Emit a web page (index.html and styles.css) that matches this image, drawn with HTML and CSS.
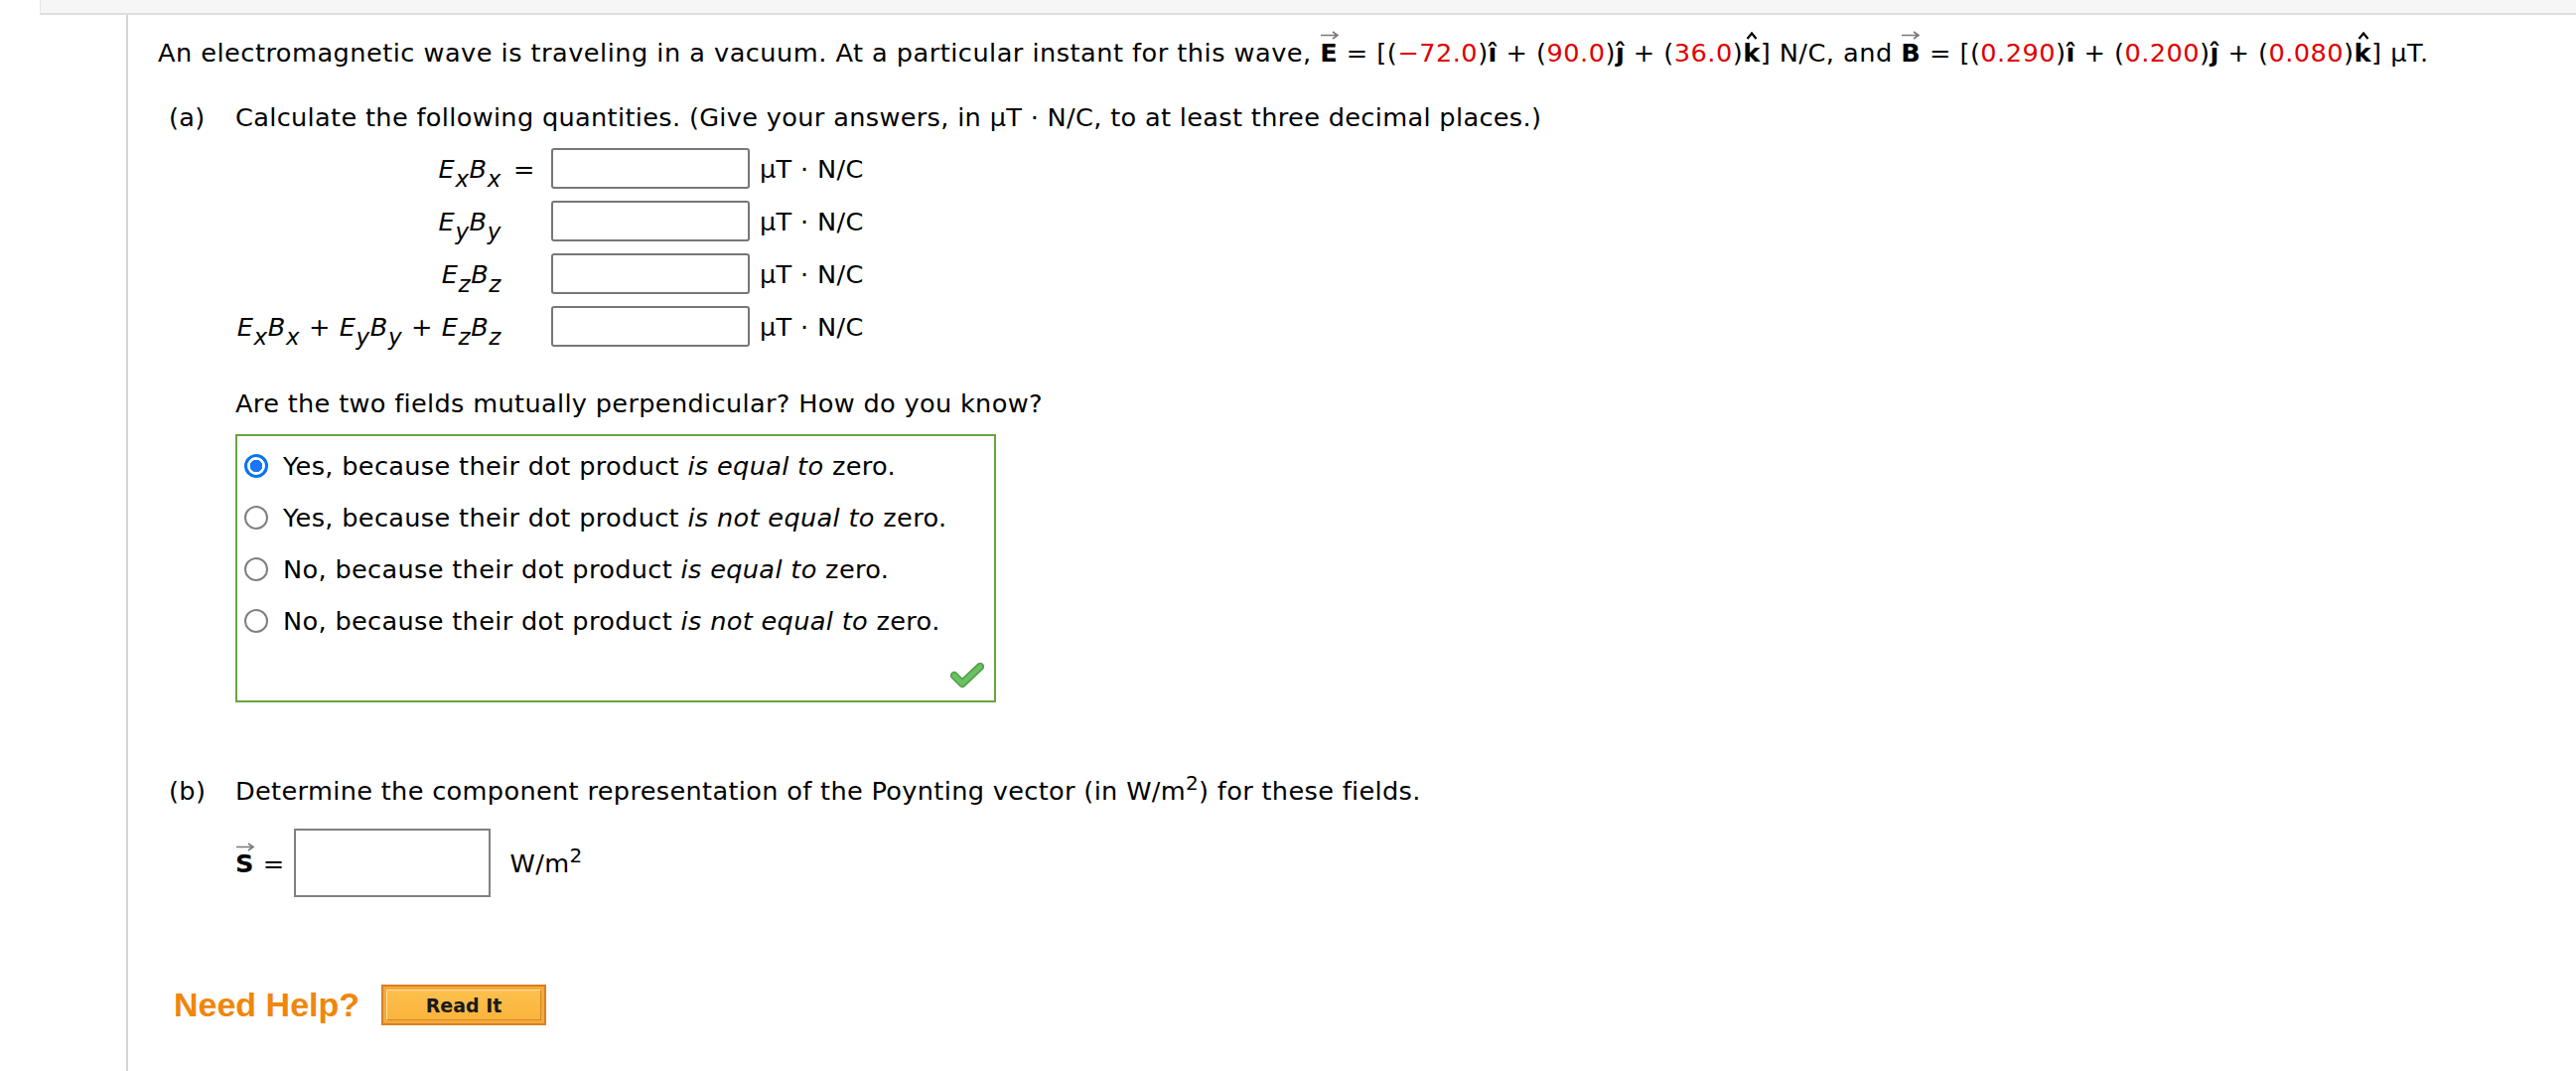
FILE: index.html
```html
<!DOCTYPE html>
<html lang="en">
<head>
<meta charset="utf-8">
<title>Electromagnetic wave</title>
<link rel="stylesheet" href="styles.css">
</head>
<body>
<div class="topbar"></div>
<div class="page">
  <div class="question">
    <p class="intro">An electromagnetic wave is traveling in a vacuum. At a particular instant for this wave, <span class="vec">E<svg class="arr" width="20" height="9" viewBox="0 0 20 9"><path d="M1 4.5 H17 M13 1 L18 4.5 L13 8" fill="none" stroke="#7a7a7a" stroke-width="1.6"/></svg></span> = [(<span class="red">&minus;72.0</span>)<b>&icirc;</b> + (<span class="red">90.0</span>)<b>&jcirc;</b> + (<span class="red">36.0</span>)<b class="khat">k<svg class="hat" width="12" height="8" viewBox="0 0 12 8"><path d="M1.5 7 L6 1.5 L10.5 7" fill="none" stroke="#000" stroke-width="2.2"/></svg></b>] N/C, and <span class="vec">B<svg class="arr" width="20" height="9" viewBox="0 0 20 9"><path d="M1 4.5 H17 M13 1 L18 4.5 L13 8" fill="none" stroke="#7a7a7a" stroke-width="1.6"/></svg></span> = [(<span class="red">0.290</span>)<b>&icirc;</b> + (<span class="red">0.200</span>)<b>&jcirc;</b> + (<span class="red">0.080</span>)<b class="khat">k<svg class="hat" width="12" height="8" viewBox="0 0 12 8"><path d="M1.5 7 L6 1.5 L10.5 7" fill="none" stroke="#000" stroke-width="2.2"/></svg></b>] &mu;T.</p>

    <div class="part part-a">
      <div class="plabel">(a)</div>
      <div class="pbody">
        <p class="line">Calculate the following quantities. (Give your answers, in &mu;T &middot; N/C, to at least three decimal places.)</p>
        <div class="qgrid">
          <div class="qlabel"><i>E</i><sub><i>x</i></sub><i>B</i><sub><i>x</i></sub></div>
          <div class="qeq">=</div>
          <div class="qbox"></div>
          <div class="qunit">&mu;T &middot; N/C</div>

          <div class="qlabel"><i>E</i><sub><i>y</i></sub><i>B</i><sub><i>y</i></sub></div>
          <div class="qeq"></div>
          <div class="qbox"></div>
          <div class="qunit">&mu;T &middot; N/C</div>

          <div class="qlabel"><i>E</i><sub><i>z</i></sub><i>B</i><sub><i>z</i></sub></div>
          <div class="qeq"></div>
          <div class="qbox"></div>
          <div class="qunit">&mu;T &middot; N/C</div>

          <div class="qlabel"><i>E</i><sub><i>x</i></sub><i>B</i><sub><i>x</i></sub> + <i>E</i><sub><i>y</i></sub><i>B</i><sub><i>y</i></sub> + <i>E</i><sub><i>z</i></sub><i>B</i><sub><i>z</i></sub></div>
          <div class="qeq"></div>
          <div class="qbox"></div>
          <div class="qunit">&mu;T &middot; N/C</div>
        </div>

        <p class="line ask">Are the two fields mutually perpendicular? How do you know?</p>
        <div class="choices">
          <div class="choice"><span class="radio on"></span><span>Yes, because their dot product <i>is equal to</i> zero.</span></div>
          <div class="choice"><span class="radio"></span><span>Yes, because their dot product <i>is not equal to</i> zero.</span></div>
          <div class="choice"><span class="radio"></span><span>No, because their dot product <i>is equal to</i> zero.</span></div>
          <div class="choice"><span class="radio"></span><span>No, because their dot product <i>is not equal to</i> zero.</span></div>
          <div class="checkrow">
            <svg class="check" width="34" height="26" viewBox="0 0 34 26">
              <path d="M4 13 L12 21 L30 4" fill="none" stroke="#4f9e45" stroke-width="8" stroke-linecap="round" stroke-linejoin="round"/>
              <path d="M4 13 L12 21 L30 4" fill="none" stroke="#6cc064" stroke-width="5" stroke-linecap="round" stroke-linejoin="round"/>
            </svg>
          </div>
        </div>
      </div>
    </div>

    <div class="part part-b">
      <div class="plabel">(b)</div>
      <div class="pbody">
        <p class="line">Determine the component representation of the Poynting vector (in W/m<sup>2</sup>) for these fields.</p>
        <div class="srow">
          <span class="vec svec">S<svg class="arr" width="20" height="9" viewBox="0 0 20 9"><path d="M1 4.5 H17 M13 1 L18 4.5 L13 8" fill="none" stroke="#7a7a7a" stroke-width="1.6"/></svg></span>
          <span class="seq">=</span>
          <span class="sbox"></span>
          <span class="sunit">W/m<sup>2</sup></span>
        </div>
      </div>
    </div>

    <div class="help">
      <span class="needhelp">Need Help?</span>
      <span class="readit"><span class="readit-in">Read It</span></span>
    </div>
  </div>
</div>
</body>
</html>
```

FILE: styles.css
```css
html, body {
  margin: 0;
  padding: 0;
  background: #ffffff;
}
body {
  font-family: "DejaVu Sans", Verdana, sans-serif;
  font-size: 25.6px;
  letter-spacing: 0.33px;
  color: #000;
  height: 1078px;
  overflow: hidden;
}
.topbar {
  margin-left: 40px;
  height: 13px;
  background: #f6f6f6;
  border-bottom: 2px solid #dedede;
  border-left: 1px solid #e6e6e6;
}
.page {
  margin-left: 127px;
  border-left: 2px solid #d4d4d4;
  min-height: 1063px;
}
.question {
  padding: 22px 0 0 30px;
}
p { margin: 0; }
.intro {
  line-height: 32px;
  white-space: nowrap;
  letter-spacing: 0.48px;
}
.red { color: #e00000; }
.vec {
  position: relative;
  display: inline-block;
  font-weight: bold;
}
.vec .arr {
  position: absolute;
  left: 0;
  top: -6px;
}
.khat {
  position: relative;
  display: inline-block;
}
.khat .hat {
  position: absolute;
  left: 3px;
  top: -5px;
}
.part {
  display: flex;
  padding-left: 11px;
}
.plabel {
  width: 67px;
  flex: none;
  line-height: 32px;
}
.pbody { flex: 1; }
.line { line-height: 32px; white-space: nowrap; }
.part-a { margin-top: 33px; }
.qgrid {
  margin-top: 15px;
  display: grid;
  grid-template-columns: 268px 50px 200px auto;
  grid-auto-rows: 41px;
  row-gap: 12px;
  align-items: center;
}
.qlabel {
  text-align: right;
  white-space: nowrap;
  line-height: 32px;
  letter-spacing: 0.6px;
}
.qlabel sub {
  font-size: 23px;
  vertical-align: -9px;
  line-height: 0;
  margin-left: 0;
}
.qeq { text-align: center; padding-right: 4px; }
.qbox {
  height: 41px;
  box-sizing: border-box;
  border: 2px solid #777;
  border-radius: 3px;
  background: #fff;
}
.qunit {
  padding-left: 10px;
  white-space: nowrap;
}
.ask { margin-top: 41px; }
.choices {
  margin-top: 15px;
  width: 766px;
  box-sizing: border-box;
  border: 2px solid #67a53d;
  padding: 4px 10px 12px 7px;
}
.choice {
  height: 52px;
  display: flex;
  align-items: center;
  gap: 15px;
  white-space: nowrap;
}
.radio {
  width: 24px;
  height: 24px;
  box-sizing: border-box;
  border-radius: 50%;
  border: 2px solid #808080;
  flex: none;
  background: #fff;
}
.radio.on {
  border: 3px solid #0b73f0;
  background: radial-gradient(circle, #1976f5 0 6px, #fff 6.5px);
}
.checkrow {
  height: 42px;
  display: flex;
  justify-content: flex-end;
  align-items: flex-end;
}
.check { display: block; }
.part-b { margin-top: 73px; }
.part-b sup {
  font-size: 20px;
  line-height: 0;
  vertical-align: 10px;
}
.srow {
  margin-top: 22px;
  display: flex;
  align-items: center;
}
.svec { margin-right: 9px; }
.seq { margin-right: 9px; }
.sbox {
  width: 198px;
  height: 69px;
  box-sizing: border-box;
  border: 2px solid #808080;
  background: #fff;
}
.sunit { margin-left: 20px; }
.help {
  margin-top: 88px;
  display: flex;
  align-items: center;
  padding-left: 16px;
  gap: 22px;
}
.needhelp {
  font-family: "Liberation Sans", Arial, sans-serif;
  font-weight: bold;
  font-size: 34px;
  letter-spacing: 0;
  color: #f0860c;
}
.readit {
  display: block;
  width: 166px;
  height: 41px;
  box-sizing: border-box;
  border: 2px solid #d9801d;
  background: #f6a83a;
  padding: 3px;
}
.readit-in {
  display: flex;
  align-items: center;
  justify-content: center;
  height: 100%;
  box-sizing: border-box;
  border: 1px solid #c98a2a;
  border-top-color: #fde0a0;
  border-left-color: #fde0a0;
  background: linear-gradient(#fcc04e, #fbb43c);
  font-family: "DejaVu Sans", Verdana, sans-serif;
  font-weight: bold;
  font-size: 19px;
  letter-spacing: 0;
  color: #1a1a1a;
}
```
